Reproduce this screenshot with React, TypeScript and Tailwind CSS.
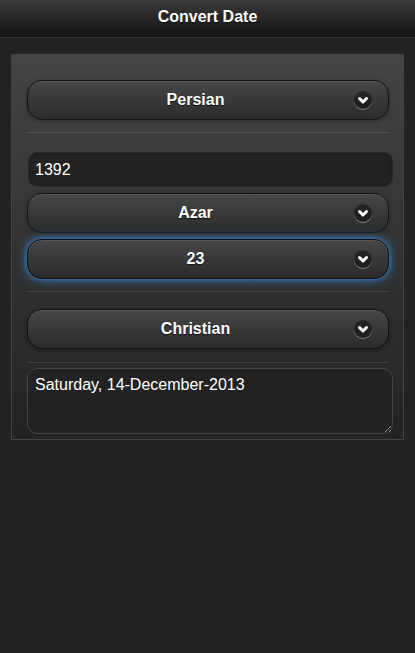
import React from 'react';

const FONT = { fontFamily: '"Liberation Sans", Arial, Helvetica, sans-serif' };

function ArrowIcon() {
  return (
    <span className="absolute right-[16px] top-1/2 -translate-y-1/2 flex h-[18px] w-[18px] items-center justify-center rounded-full bg-black/40 shadow-[0_1px_0_rgba(255,255,255,0.4)]">
      <svg width="18" height="18" viewBox="0 0 18 18">
        <polyline
          points="5.5,7.5 9,11 12.5,7.5"
          fill="none"
          stroke="#fff"
          strokeWidth="3"
          strokeLinecap="round"
          strokeLinejoin="round"
        />
      </svg>
    </span>
  );
}

function SelectButton({ label, focused = false }: { label: string; focused?: boolean }) {
  return (
    <div
      className={
        'relative mr-[3px] flex h-[40px] items-center rounded-[15px] border border-[#111] bg-gradient-to-b from-[#474747] to-[#2b2b2b] pl-[15px] pr-[40px] ' +
        (focused
          ? 'shadow-[0_0_12px_#387bbe,0_0_4px_#387bbe,inset_0_1px_0_rgba(255,255,255,0.1)]'
          : 'shadow-[0_1px_4px_rgba(0,0,0,0.3),inset_0_1px_0_rgba(255,255,255,0.1)]')
      }
    >
      <span className="flex-1 text-center text-[16px] font-bold text-white [text-shadow:0_1px_1px_#111]">
        {label}
      </span>
      <ArrowIcon />
    </div>
  );
}

export default function App() {
  return (
    <div className="min-h-[653px] bg-[#222] text-white" style={FONT}>
      {/* Header */}
      <div className="flex h-[38px] items-center justify-center border-b border-[#333] bg-gradient-to-b from-[#3c3c3c] to-[#111]">
        <h1 className="-mt-[4px] text-[16px] font-bold text-white [text-shadow:0_1px_1px_#111]">Convert Date</h1>
      </div>

      {/* Content */}
      <div className="px-[11px] pt-[16px]">
        <div className="border border-[#444] bg-gradient-to-b from-[#444] to-[#222] pb-[5px] pl-[15px] pr-[11px] pt-[25px]">
          <SelectButton label="Persian" />

          <div className="mr-[3px] mt-[12px] border-t border-white/10" />

          <input
            readOnly
            value="1392"
            className="ml-[1px] mt-[19px] block h-[35px] w-[365px] rounded-[9px] border border-[#2b2b2b] bg-[#222] px-[6px] text-[16px] text-white shadow-[inset_0_1px_4px_rgba(0,0,0,0.2)] outline-none"
            style={FONT}
          />

          <div className="mt-[6px]">
            <SelectButton label="Azar" />
          </div>
          <div className="mt-[6px]">
            <SelectButton label="23" focused />
          </div>

          <div className="mr-[3px] mt-[12px] border-t border-white/10" />

          <div className="mt-[17px]">
            <SelectButton label="Christian" />
          </div>

          <div className="mr-[3px] mt-[13px] border-t border-white/10" />

          <textarea
            readOnly
            value="Saturday, 14-December-2013"
            className="mt-[5px] block h-[66px] w-[366px] rounded-[10px] border border-[#444] bg-[#222] px-[7px] pb-[4px] pt-[6px] text-[16px] leading-[20px] text-white outline-none"
            style={FONT}
          />
        </div>
      </div>
    </div>
  );
}
